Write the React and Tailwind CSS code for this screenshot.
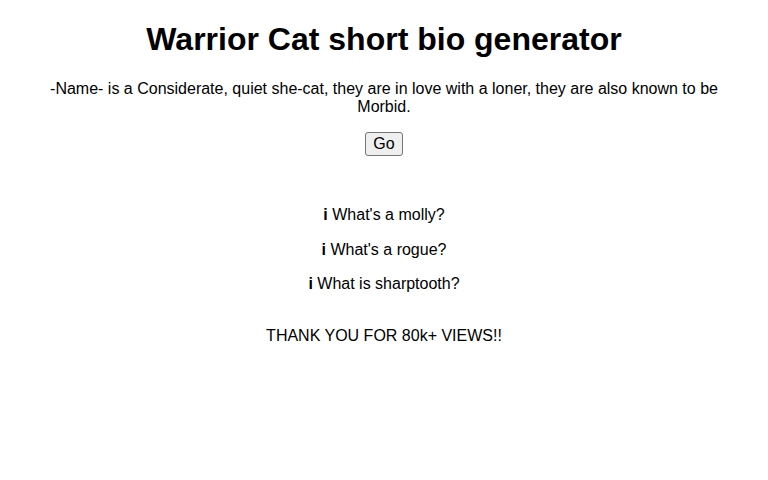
export default function App() {
  const infos = ["What's a molly?", "What's a rogue?", "What is sharptooth?"];
  return (
    <div className="min-h-screen bg-white px-2 text-center text-[16px] leading-[18.4px] text-black font-['Liberation_Sans',Arial,sans-serif]">
      <h1 className="pt-[21px] text-[32px] leading-[37px] font-bold">
        Warrior Cat short bio generator
      </h1>

      <p className="mx-auto mt-[22px] max-w-[680px]">
        -Name- is a Considerate, quiet she-cat, they are in love with a loner,
        they are also known to be Morbid.
      </p>

      <button className="mt-[15px] rounded-[3px] border border-[#767676] bg-[#efefef] px-[7px] py-[2px] text-[16px] leading-[18.4px]">
        Go
      </button>

      {/* info links */}
      <div className="mt-[50px] flex flex-col gap-4">
        {infos.map((t) => (
          <p key={t}>
            <b>i</b> {t}
          </p>
        ))}
      </div>

      <p className="mt-[34px]">THANK YOU FOR 80k+ VIEWS!!</p>
    </div>
  );
}
